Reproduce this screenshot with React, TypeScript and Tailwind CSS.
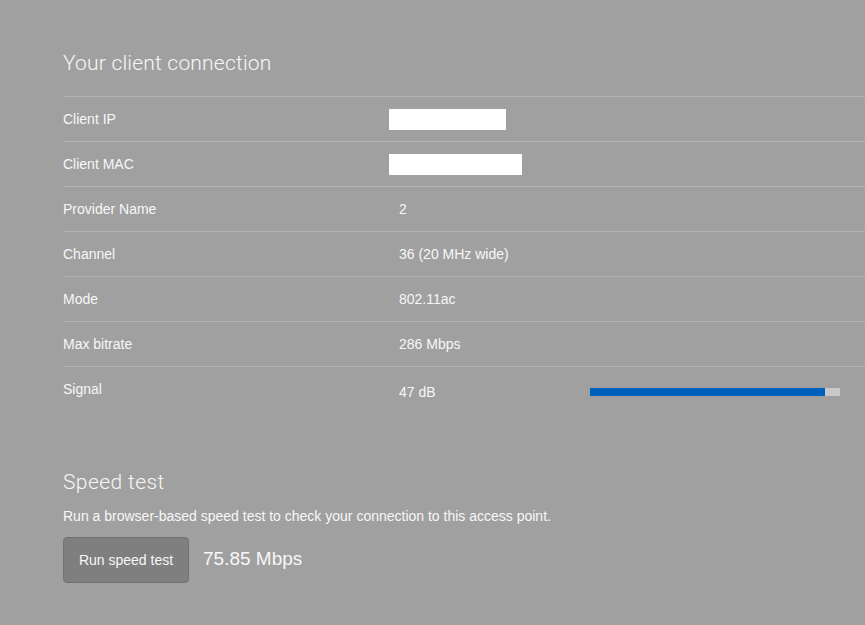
const rows: { label: string; value?: string; box?: number }[] = [
  { label: "Client IP", box: 117 },
  { label: "Client MAC", box: 133 },
  { label: "Provider Name", value: "2" },
  { label: "Channel", value: "36 (20 MHz wide)" },
  { label: "Mode", value: "802.11ac" },
  { label: "Max bitrate", value: "286 Mbps" },
];

const signal = 94;

export default function App() {
  return (
    <div className="min-h-[625px] bg-[#a0a0a0] pl-[63px] text-[#f7f7f7] font-['Liberation_Sans',Arial,sans-serif]">
      <section className="pt-[50px]">
        <h2 className="text-[21px] leading-[26px] font-light font-['Roboto','Liberation_Sans',sans-serif] tracking-[0.2px]">
          Your client connection
        </h2>
        <div className="mt-[20px]">
          {rows.map((r) => (
            <div key={r.label} className="flex h-[45px] items-center border-t border-[#b4b4b4] text-[14px]">
              <div className="w-[326px]">{r.label}</div>
              {r.box ? (
                <div className="h-[21px] bg-white" style={{ width: r.box }} />
              ) : (
                <div className="pl-[10px]">{r.value}</div>
              )}
            </div>
          ))}
          <div className="flex h-[45px] items-center border-t border-[#b4b4b4] text-[14px]">
            <div className="w-[326px]">Signal</div>
            <div className="w-[201px] pl-[10px] mt-[6px]">47 dB</div>
            <div className="mt-[6px] flex h-[8px] w-[250px] bg-[#c8c8c8]">
              <div className="h-full bg-[#0060bf]" style={{ width: `${signal}%` }} />
            </div>
          </div>
        </div>
      </section>

      <section className="pt-[58px]">
        <h2 className="text-[21px] leading-[26px] font-light font-['Roboto','Liberation_Sans',sans-serif] tracking-[0.4px]">
          Speed test
        </h2>
        <p className="mt-[12px] text-[14px] leading-[18px]">
          Run a browser-based speed test to check your connection to this access point.
        </p>
        <div className="mt-[12px] flex items-center gap-[14px]">
          <button className="h-[46px] w-[126px] rounded-[4px] border border-[#727272] bg-[#7f7f7f] text-[14px] text-[#f7f7f7]">
            Run speed test
          </button>
          <span className="text-[19px] -mt-[1px]">75.85 Mbps</span>
        </div>
      </section>
    </div>
  );
}
